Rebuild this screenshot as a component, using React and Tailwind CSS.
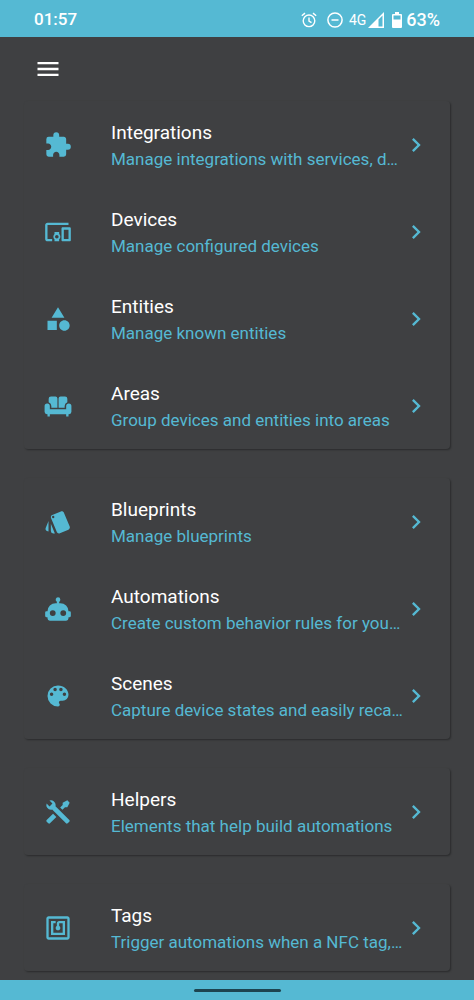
import { MdDevicesOther, MdNfc } from "react-icons/md";

const paths = {
  menu: "M3 6h18v2H3V6m0 5h18v2H3v-2m0 5h18v2H3v-2z",
  chevron: "M8.59 16.58L13.17 12L8.59 7.41L10 6l6 6l-6 6l-1.41-1.42z",
  puzzle:
    "M20.5 11H19V7c0-1.11-.9-2-2-2h-4V3.5A2.5 2.5 0 0 0 10.5 1A2.5 2.5 0 0 0 8 3.5V5H4a2 2 0 0 0-2 2v3.8h1.5c1.5 0 2.7 1.2 2.7 2.7S5 16.2 3.5 16.2H2V20a2 2 0 0 0 2 2h3.8v-1.5c0-1.5 1.2-2.7 2.7-2.7s2.7 1.2 2.7 2.7V22H17a2 2 0 0 0 2-2v-4h1.5a2.5 2.5 0 0 0 0-5z",
  shape:
    "M11 13.5v8H3v-8h8M12 2l5.5 9h-11L12 2m5.5 11c2.5 0 4.5 2 4.5 4.5S20 22 17.5 22S13 20 13 17.5S15 13 17.5 13z",
  sofa:
    "M6 3.800h3.800a1.700 1.700 0 0 1 1.700 1.700V13.500H6.300V12A3.400 3.400 0 0 0 4 8.800V5.800a2 2 0 0 1 2-2zM14.200 3.800H18a2 2 0 0 1 2 2v3A3.400 3.400 0 0 0 17.700 12v1.500h-5.200V5.500a1.700 1.700 0 0 1 1.700-1.700zM2.700 9.800A2.200 2.200 0 0 1 5 12v2.800h14V12a2.200 2.200 0 0 1 4.500 0v5a2 2 0 0 1-2 2H21v2h-2v-2H5v2H3v-2h-.5a2 2 0 0 1-2-2v-5a2.200 2.200 0 0 1 2.200-2.200z",
  swatch:
    "M2.53 19.65l1.34.56v-9.03l-2.43 5.86c-.41 1.02.06 2.19 1.09 2.61M22.03 15.95L17.07 4c-.31-.77-1.04-1.23-1.81-1.25c-.26 0-.53.04-.79.15L7.1 5.95c-.75.31-1.21 1.05-1.23 1.8c-.01.25.04.54.13.8l5 11.95c.29.78 1.03 1.24 1.81 1.25c.26 0 .52-.05.77-.15l7.36-3.05c1.02-.42 1.51-1.59 1.09-2.6M7.88 8.75a1 1 0 1 1 0-2a1 1 0 0 1 0 2m-2 11a2 2 0 0 0 2 2h1.45l-3.45-8.34v6.34z",
  robot:
    "M12 2a2 2 0 0 1 2 2c0 .74-.4 1.39-1 1.73V7h1a7 7 0 0 1 7 7h1a1 1 0 0 1 1 1v3a1 1 0 0 1-1 1h-1v1a2 2 0 0 1-2 2H5a2 2 0 0 1-2-2v-1H2a1 1 0 0 1-1-1v-3a1 1 0 0 1 1-1h1a7 7 0 0 1 7-7h1V5.73A2 2 0 0 1 12 2M7.5 13a2.5 2.5 0 1 0 0 5a2.5 2.5 0 0 0 0-5m9 0a2.5 2.5 0 1 0 0 5a2.5 2.5 0 0 0 0-5z",
  palette:
    "M17.5 12a1.5 1.5 0 1 1 0-3a1.5 1.5 0 0 1 0 3m-3-4a1.5 1.5 0 1 1 0-3a1.5 1.5 0 0 1 0 3m-5 0a1.5 1.5 0 1 1 0-3a1.5 1.5 0 0 1 0 3m-3 4a1.5 1.5 0 1 1 0-3a1.5 1.5 0 0 1 0 3M12 3a9 9 0 0 0 0 18a1.5 1.5 0 0 0 1.5-1.5c0-.39-.15-.74-.39-1c-.23-.27-.38-.62-.38-1a1.5 1.5 0 0 1 1.5-1.5H16a5 5 0 0 0 5-5c0-4.42-4.03-8-9-8z",
  tools:
    "M21.71 20.29l-1.42 1.42a1 1 0 0 1-1.41 0L7 9.85A3.81 3.81 0 0 1 6 10a4 4 0 0 1-3.78-5.3l2.54 2.54l2.48-2.48L4.7 2.22A4 4 0 0 1 10 6a3.81 3.81 0 0 1-.15 1l11.86 11.88a1 1 0 0 1 0 1.41M2.29 18.88a1 1 0 0 0 0 1.41l1.42 1.42a1 1 0 0 0 1.41 0l5.47-5.46l-2.83-2.83M20 2l-4 2v2l-2.17 2.17l2 2L18 8h2l2-4z",
};

const Icon = ({ name, className = "size-7" }) => (
  <svg viewBox="0 0 24 24" className={className} fill="currentColor" fillRule="evenodd" aria-hidden="true">
    <path d={paths[name]} />
  </svg>
);

const groups = [
  [
    { title: "Integrations", text: "Manage integrations with services, devices, and more", icon: <Icon name="puzzle" /> },
    { title: "Devices", text: "Manage configured devices", icon: <MdDevicesOther className="size-7" /> },
    { title: "Entities", text: "Manage known entities", icon: <Icon name="shape" /> },
    { title: "Areas", text: "Group devices and entities into areas", icon: <Icon name="sofa" /> },
  ],
  [
    { title: "Blueprints", text: "Manage blueprints", icon: <Icon name="swatch" /> },
    { title: "Automations", text: "Create custom behavior rules for your home", icon: <Icon name="robot" /> },
    { title: "Scenes", text: "Capture device states and easily recall them later", icon: <Icon name="palette" /> },
  ],
  [{ title: "Helpers", text: "Elements that help build automations", icon: <Icon name="tools" /> }],
  [{ title: "Tags", text: "Trigger automations when a NFC tag, QR code, etc. is scanned", icon: <MdNfc className="size-7" /> }],
];

const StatusBar = () => (
  <div className="flex h-[37px] items-center bg-[#55b9d3] px-[34px] pt-0.5 text-[17px] font-medium text-white">
    <span>01:57</span>
    <div className="ml-auto flex items-center">
      {/* Alarm */}
      <svg viewBox="0 0 16 16" className="mr-2.5 size-4" fill="none" stroke="currentColor" strokeWidth="1.4">
        <circle cx="8" cy="8.8" r="5.8" />
        <path d="M8 5.5v3.6l2.5 1.6M.8 3.8L4 1.1M15.2 3.8L12 1.1" />
      </svg>
      {/* Do not disturb */}
      <svg viewBox="0 0 16 16" className="mr-1.5 size-4" fill="none" stroke="currentColor" strokeWidth="1.5">
        <circle cx="8" cy="8" r="7.1" />
        <path d="M4.5 8h7" />
      </svg>
      <span className="text-sm font-normal">4G</span>
      {/* Signal */}
      <svg viewBox="0 0 16 16" className="mr-2 ml-0.5 size-4" fill="currentColor">
        <path fillRule="evenodd" d="M16 0v16H0L16 0zM14.5 3.6L10.5 7.6v6.9h4z" />
      </svg>
      {/* Battery */}
      <svg viewBox="0 0 10 16" className="mr-1 h-4 w-2.5" fill="currentColor">
        <path fillRule="evenodd" d="M3 0h4v2h2a1 1 0 0 1 1 1v12a1 1 0 0 1-1 1H1a1 1 0 0 1-1-1V3a1 1 0 0 1 1-1h2zM1.5 3.5v4h7v-4z" />
      </svg>
      <span className="text-lg">63%</span>
    </div>
  </div>
);

const SettingsRow = ({ title, text, icon }) => (
  <a href="#" className="flex h-[87px] items-center px-5 text-[#55b9d3]">
    <span className="mr-[39px] shrink-0">{icon}</span>
    <span className="min-w-0 flex-1 pt-0.5">
      <span className="block truncate text-[19px] leading-[26px] text-white">{title}</span>
      <span className="block truncate text-[17px] leading-[26px]">{text}</span>
    </span>
    <Icon name="chevron" className="-ml-0.5 size-7 shrink-0" />
  </a>
);

export default function App() {
  return (
    <div className="flex min-h-screen flex-col bg-[#3f4042] font-['Roboto',sans-serif]">
      <StatusBar />
      <header className="flex h-16 items-center pl-[34px] text-white">
        <button type="button" aria-label="Menu">
          <Icon name="menu" />
        </button>
      </header>
      <main className="flex flex-1 flex-col gap-[29px] px-6 pb-2">
        {groups.map((rows) => (
          <nav key={rows[0].title} className="rounded-sm shadow-[1px_1px_2px_rgba(0,0,0,0.35)]">
            {rows.map((row) => (
              <SettingsRow key={row.title} {...row} />
            ))}
          </nav>
        ))}
      </main>
      <footer className="flex h-5 items-center justify-center bg-[#55b9d3]">
        <div className="h-[3px] w-[87px] rounded-full bg-[#1d4450]" />
      </footer>
    </div>
  );
}
